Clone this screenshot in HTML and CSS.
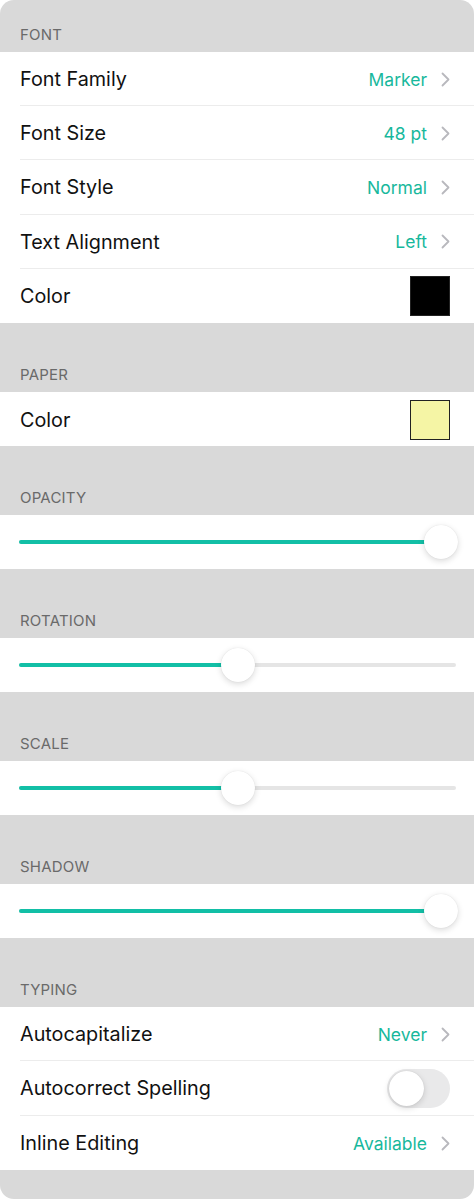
FILE: index.html
```html
<!DOCTYPE html>
<html>
<head>
  <title>Text Settings</title>
  <link rel="stylesheet" href="styles.css">
</head>
<body>
  <div class="panel">
    <div class="section-header first">FONT</div>
    <div class="group">
      <div class="row">
        <span class="label">Font Family</span>
        <span class="value">Marker</span>
        <svg class="chevron" viewBox="0 0 9 15"><path d="M1.5 1.5 L7.5 7.5 L1.5 13.5"/></svg>
      </div>
      <div class="row">
        <span class="label">Font Size</span>
        <span class="value">48 pt</span>
        <svg class="chevron" viewBox="0 0 9 15"><path d="M1.5 1.5 L7.5 7.5 L1.5 13.5"/></svg>
      </div>
      <div class="row">
        <span class="label">Font Style</span>
        <span class="value">Normal</span>
        <svg class="chevron" viewBox="0 0 9 15"><path d="M1.5 1.5 L7.5 7.5 L1.5 13.5"/></svg>
      </div>
      <div class="row">
        <span class="label">Text Alignment</span>
        <span class="value">Left</span>
        <svg class="chevron" viewBox="0 0 9 15"><path d="M1.5 1.5 L7.5 7.5 L1.5 13.5"/></svg>
      </div>
      <div class="row last">
        <span class="label">Color</span>
        <span class="swatch black"></span>
      </div>
    </div>

    <div class="section-header">PAPER</div>
    <div class="group">
      <div class="row last">
        <span class="label">Color</span>
        <span class="swatch yellow"></span>
      </div>
    </div>

    <div class="section-header">OPACITY</div>
    <div class="group">
      <div class="slider-row">
        <div class="track"><div class="fill" style="width: 96.5%"></div><div class="thumb" style="left: 96.5%"></div></div>
      </div>
    </div>

    <div class="section-header">ROTATION</div>
    <div class="group">
      <div class="slider-row">
        <div class="track"><div class="fill" style="width: 50%"></div><div class="thumb" style="left: 50%"></div></div>
      </div>
    </div>

    <div class="section-header">SCALE</div>
    <div class="group">
      <div class="slider-row">
        <div class="track"><div class="fill" style="width: 50%"></div><div class="thumb" style="left: 50%"></div></div>
      </div>
    </div>

    <div class="section-header">SHADOW</div>
    <div class="group">
      <div class="slider-row">
        <div class="track"><div class="fill" style="width: 96.5%"></div><div class="thumb" style="left: 96.5%"></div></div>
      </div>
    </div>

    <div class="section-header">TYPING</div>
    <div class="group">
      <div class="row">
        <span class="label">Autocapitalize</span>
        <span class="value">Never</span>
        <svg class="chevron" viewBox="0 0 9 15"><path d="M1.5 1.5 L7.5 7.5 L1.5 13.5"/></svg>
      </div>
      <div class="row">
        <span class="label">Autocorrect Spelling</span>
        <span class="toggle"><span class="knob"></span></span>
      </div>
      <div class="row last">
        <span class="label">Inline Editing</span>
        <span class="value">Available</span>
        <svg class="chevron" viewBox="0 0 9 15"><path d="M1.5 1.5 L7.5 7.5 L1.5 13.5"/></svg>
      </div>
    </div>
    <div class="footer"></div>
  </div>
</body>
</html>
```

FILE: styles.css
```css
body {
  margin: 0;
  background-color: white;
  font-family: Inter, "Liberation Sans", sans-serif;
  color: #111;
}

.panel {
  width: 474px;
  height: 1199px;
  background-color: #d9d9d9;
  border-radius: 14px;
  overflow: hidden;
}

.section-header {
  height: 69px;
  box-sizing: border-box;
  padding: 42px 0 0 20px;
  font-size: 15px;
  color: #6a6a6a;
  letter-spacing: 0.2px;
}

.section-header.first {
  height: 52px;
  padding-top: 25px;
}

.group {
  background-color: white;
}

.row {
  height: 54.2px;
  box-sizing: border-box;
  margin-left: 20px;
  padding-right: 24px;
  padding-top: 1px;
  border-bottom: 1px solid #ececec;
  display: flex;
  align-items: center;
}

.row.last {
  border-bottom: none;
}

.label {
  flex: 1;
  font-size: 19.8px;
}

.value {
  font-size: 17.5px;
  color: #17b89c;
  margin-right: 14px;
}

.chevron {
  width: 9px;
  height: 15px;
  fill: none;
  stroke: #b8b8bd;
  stroke-width: 1.8;
  stroke-linecap: round;
  stroke-linejoin: round;
}

.swatch {
  width: 38px;
  height: 38px;
  border: 1px solid #222;
}

.swatch.black {
  background-color: black;
}

.swatch.yellow {
  background-color: #f5f5a5;
}

.slider-row {
  height: 54px;
  padding: 0 18px 0 19px;
  display: flex;
  align-items: center;
}

.track {
  position: relative;
  flex: 1;
  height: 4px;
  border-radius: 2px;
  background-color: #e5e5e5;
}

.fill {
  height: 4px;
  border-radius: 2px;
  background-color: #12bfa6;
}

.thumb {
  position: absolute;
  top: -15px;
  width: 34px;
  height: 34px;
  margin-left: -17px;
  border-radius: 50%;
  background-color: white;
  box-shadow: 0 2px 6px rgba(0, 0, 0, 0.15), 0 0 1px rgba(0, 0, 0, 0.12);
}

.toggle {
  position: relative;
  width: 63px;
  height: 39px;
  border-radius: 20px;
  background-color: #e9e9ea;
}

.toggle .knob {
  position: absolute;
  top: 2px;
  left: 2px;
  width: 35px;
  height: 35px;
  border-radius: 50%;
  background-color: white;
  box-shadow: 0 2px 6px rgba(0, 0, 0, 0.15), 0 0 1px rgba(0, 0, 0, 0.15);
}

.footer {
  height: 30px;
}
```
